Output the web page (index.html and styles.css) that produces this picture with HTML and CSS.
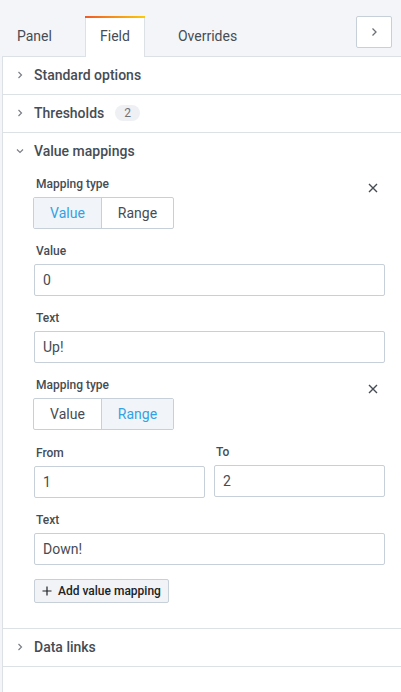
FILE: index.html
```html
<!DOCTYPE html>
<html>
<head>
<meta charset="utf-8">
<link rel="stylesheet" href="styles.css">
</head>
<body>
<div class="header">
  <div class="tab">Panel</div>
  <div class="tab active">Field</div>
  <div class="tab">Overrides</div>
  <button class="collapse-btn">
    <svg width="8" height="10" viewBox="0 0 8 10"><polyline points="2.5,1.5 6,5 2.5,8.5" fill="none" stroke="#6e7077" stroke-width="1.3"/></svg>
  </button>
</div>
<div class="pane">
  <div class="section">
    <div class="section-head">
      <svg class="chev" width="8" height="10" viewBox="0 0 8 10"><polyline points="2.5,2 5.5,5 2.5,8" fill="none" stroke="#7b8087" stroke-width="1.2"/></svg>
      <span class="section-title">Standard options</span>
    </div>
  </div>
  <div class="section">
    <div class="section-head">
      <svg class="chev" width="8" height="10" viewBox="0 0 8 10"><polyline points="2.5,2 5.5,5 2.5,8" fill="none" stroke="#7b8087" stroke-width="1.2"/></svg>
      <span class="section-title">Thresholds</span>
      <span class="badge">2</span>
    </div>
  </div>
  <div class="section">
    <div class="section-head">
      <svg class="chev" width="8" height="10" viewBox="0 0 8 10"><polyline points="1,3.5 4,6.5 7,3.5" fill="none" stroke="#7b8087" stroke-width="1.2"/></svg>
      <span class="section-title">Value mappings</span>
    </div>
    <div class="section-body">
      <div class="mapping">
        <div class="field">
          <div class="field-top">
            <label class="label">Mapping type</label>
            <svg class="close" width="10" height="10" viewBox="0 0 10 10"><path d="M1 1L9 9M9 1L1 9" stroke="#464c54" stroke-width="1.4"/></svg>
          </div>
          <div class="radio-group">
            <span class="radio active seg-value">Value</span>
            <span class="radio seg-range">Range</span>
          </div>
        </div>
        <div class="field">
          <label class="label">Value</label>
          <div class="input">0</div>
        </div>
        <div class="field">
          <label class="label">Text</label>
          <div class="input">Up!</div>
        </div>
      </div>
      <div class="mapping">
        <div class="field">
          <div class="field-top">
            <label class="label">Mapping type</label>
            <svg class="close" width="10" height="10" viewBox="0 0 10 10"><path d="M1 1L9 9M9 1L1 9" stroke="#464c54" stroke-width="1.4"/></svg>
          </div>
          <div class="radio-group">
            <span class="radio seg-value">Value</span>
            <span class="radio active seg-range">Range</span>
          </div>
        </div>
        <div class="field-row">
          <div class="field">
            <label class="label">From</label>
            <div class="input">1</div>
          </div>
          <div class="field">
            <label class="label">To</label>
            <div class="input">2</div>
          </div>
        </div>
        <div class="field">
          <label class="label">Text</label>
          <div class="input">Down!</div>
        </div>
      </div>
      <button class="add-btn">
        <svg width="10" height="10" viewBox="0 0 10 10"><path d="M5 0.5V9.5M0.5 5H9.5" stroke="#202226" stroke-width="1.2"/></svg>
        <span>Add value mapping</span>
      </button>
    </div>
  </div>
  <div class="section">
    <div class="section-head">
      <svg class="chev" width="8" height="10" viewBox="0 0 8 10"><polyline points="2.5,2 5.5,5 2.5,8" fill="none" stroke="#7b8087" stroke-width="1.2"/></svg>
      <span class="section-title">Data links</span>
    </div>
  </div>
</div>
</body>
</html>
```

FILE: styles.css
```css
* { box-sizing: border-box; }
html, body { margin: 0; padding: 0; height: 100%; }
body {
  background: #f4f5f8;
  font-family: Roboto, "Liberation Sans", sans-serif;
  color: #464c54;
  font-size: 14px;
  overflow: hidden;
}
.header {
  height: 56px;
  display: flex;
  align-items: flex-end;
  padding: 0 9px 0 1px;
}
.tab {
  height: 40px;
  line-height: 40px;
  padding: 0 16px;
  margin-right: 17px;
  font-size: 14px;
  color: #464c54;
}
.tab.active {
  width: 60px;
  padding: 0;
  text-align: center;
  background: #fff;
  border: 1px solid #dce1e6;
  border-bottom: none;
  border-top: none;
  position: relative;
  margin-bottom: -1px;
  height: 41px;
  line-height: 41px;
  z-index: 1;
}
.tab.active::before {
  content: "";
  position: absolute;
  left: -1px; right: -1px; top: 0;
  height: 2px;
  background: linear-gradient(90deg, #f05a28, #fbca0a);
}
.collapse-btn {
  margin-left: auto;
  align-self: flex-start;
  margin-top: 16px;
  width: 36px;
  height: 32px;
  background: #fff;
  border: 1px solid #c7d0d9;
  border-radius: 2px;
  display: flex;
  align-items: center;
  justify-content: center;
  padding: 0;
}
.pane {
  margin-left: 2px;
  background: #fff;
  border-left: 1px solid #dce1e6;
  border-top: 1px solid #dce1e6;
  height: calc(100% - 56px);
}
.section {
  border-bottom: 1px solid #dce1e6;
}
.section-head {
  height: 37px;
  display: flex;
  align-items: center;
  padding-left: 13px;
  padding-bottom: 1px;
}
.chev { margin-right: 10px; flex: none; }
.section-title {
  font-weight: 500;
  font-size: 14px;
  color: #464c54;
}
.badge {
  margin-left: 11px;
  height: 16px;
  line-height: 16px;
  padding: 0 9px;
  border-radius: 8px;
  background: #eef0f4;
  color: #6e7077;
  font-size: 12px;
}
.section-body {
  padding: 6px 16px 25px 31px;
}
.field { margin-bottom: 14px; }
.field-top {
  display: flex;
  justify-content: space-between;
  align-items: flex-start;
}
.label {
  display: block;
  font-size: 12px;
  line-height: 16px;
  font-weight: 500;
  color: #464c54;
  margin-bottom: 5px;
  padding-left: 2px;
}
.close { margin-top: 7px; margin-right: 7px; }
.radio-group {
  display: inline-flex;
  height: 32px;
  margin-left: -1px;
  border: 1px solid #c7d0d9;
  border-radius: 2px;
  overflow: hidden;
}
.radio {
  display: flex;
  align-items: center;
  justify-content: center;
  font-size: 14px;
  color: #464c54;
}
.seg-value { width: 68px; border-right: 1px solid #c7d0d9; }
.seg-range { width: 71px; }
.radio.active {
  background: #f1f4f8;
  color: #33a2e5;
}
.input {
  height: 32px;
  border: 1px solid #c7d0d9;
  border-radius: 2px;
  padding-left: 8px;
  line-height: 30px;
  font-size: 14px;
  color: #464c54;
}
.field-row {
  display: grid;
  grid-template-columns: 1fr 1fr;
  gap: 9px;
}
.mapping + .mapping .field:first-child { margin-top: 1px; }
.add-btn {
  margin-top: 2px;
  height: 24px;
  display: flex;
  align-items: center;
  gap: 6px;
  padding: 0 7px;
  white-space: nowrap;
  background: #f1f3f6;
  border: 1px solid #c7d0d9;
  border-radius: 2px;
  font-family: Roboto, "Liberation Sans", sans-serif;
  font-size: 12px;
  font-weight: 500;
  color: #202226;
}
```
